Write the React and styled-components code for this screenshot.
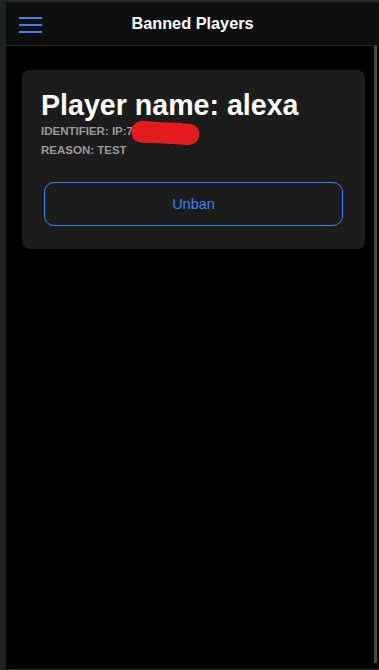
import React from 'react'
import styled, { createGlobalStyle } from 'styled-components'

const GlobalStyle = createGlobalStyle`
  * { box-sizing: border-box; }
  html, body {
    margin: 0;
    padding: 0;
    background: #000;
    font-family: "Liberation Sans", Arial, sans-serif;
  }
`

const Frame = styled.div`
  width: 379px;
  height: 670px;
  border-left: 6px solid #202124;
  border-top: 2px solid #2a2a2a;
  border-bottom: 1px solid #2e2e2e;
  background: #000;
  display: flex;
  flex-direction: column;
  overflow: hidden;
`

const Header = styled.header`
  height: 44px;
  flex-shrink: 0;
  background: #0e0e0e;
  border-bottom: 1px solid #2a2a2a;
  display: flex;
  align-items: center;
  position: relative;
  padding-left: 13px;
`

const MenuButton = styled.button`
  width: 23px;
  height: 16px;
  padding: 0;
  border: none;
  background: transparent;
  display: flex;
  flex-direction: column;
  justify-content: space-between;
  cursor: pointer;
  margin-top: 2px;
`

const MenuLine = styled.span`
  display: block;
  height: 2px;
  width: 100%;
  background: #3a83f1;
`

const Title = styled.h1`
  position: absolute;
  left: 0;
  right: 0;
  margin: 0;
  text-align: center;
  font-size: 16.3px;
  font-weight: 700;
  color: #fff;
  pointer-events: none;
  transform: translateX(0px);
`

const Body = styled.div`
  flex: 1;
  display: flex;
  min-height: 0;
`

const Content = styled.main`
  flex: 1;
  padding: 24px 9px 0 16px;
`

const ScrollTrack = styled.div`
  width: 5px;
  padding: 0 2px 6px 0;
  display: flex;
`

const ScrollThumb = styled.div`
  flex: 1;
  background: #4a4a4a;
`

const Card = styled.section`
  background: #1c1c1c;
  border-radius: 8px;
  padding: 19px 19px 23px;
`

const PlayerName = styled.h2`
  margin: 0 0 1px;
  font-size: 28.6px;
  line-height: 32px;
  font-weight: 700;
  color: #fff;
`

const Info = styled.div`
  font-size: 11.5px;
  line-height: 19px;
  font-weight: 700;
  color: #9a9a9a;
  text-transform: uppercase;
`

const Redact = styled.span`
  display: inline-block;
  position: relative;
  width: 0;
  height: 0;

  svg {
    position: absolute;
    left: -2px;
    top: -15px;
  }
`

const UnbanButton = styled.button`
  display: block;
  width: calc(100% - 6px);
  margin: 22px 3px 0;
  height: 44px;
  border: 1px solid #3a83f1;
  border-radius: 10px;
  background: transparent;
  color: #3a83f1;
  font-family: "Liberation Sans", Arial, sans-serif;
  font-size: 14.5px;
  cursor: pointer;
`

const players = [
  { name: 'alexa', identifier: 'IP:7', reason: 'test' },
]

const BanCard = ({ name, identifier, reason }) => (
  <Card>
    <PlayerName>Player name: {name}</PlayerName>
    <Info>
      Identifier: {identifier}
      <Redact>
        <svg width="70" height="26" viewBox="0 0 70 26">
          <path
            d="M2 6 C5 1 10 0 16 1 C28 3 46 2 59 4 C66 5 69 10 68 16 C67 23 62 25 55 25 C43 24 30 23 17 23 C8 23 2 22 1 15 C0 10 0 8 2 6 Z"
            fill="#e21c1c"
          />
        </svg>
      </Redact>
    </Info>
    <Info>Reason: {reason}</Info>
    <UnbanButton>Unban</UnbanButton>
  </Card>
)

const App = () => {
  return (
    <>
      <GlobalStyle />
      <Frame>
        <Header>
          <MenuButton aria-label="menu">
            <MenuLine />
            <MenuLine />
            <MenuLine />
          </MenuButton>
          <Title>Banned Players</Title>
        </Header>
        <Body>
          <Content>
            {players.map((p) => (
              <BanCard key={p.name} {...p} />
            ))}
          </Content>
          <ScrollTrack>
            <ScrollThumb />
          </ScrollTrack>
        </Body>
      </Frame>
    </>
  )
}

export default App
